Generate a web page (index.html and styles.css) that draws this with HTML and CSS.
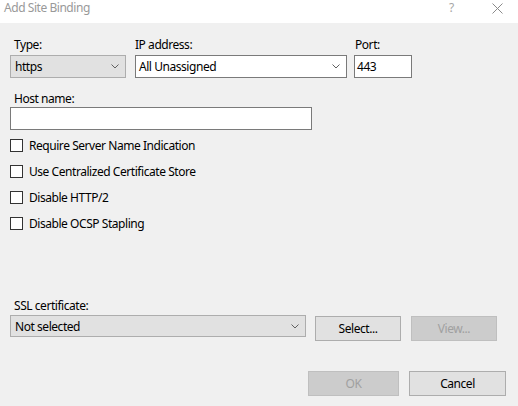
FILE: index.html
```html
<!DOCTYPE html>
<html>
<head>
<meta charset="utf-8">
<link rel="stylesheet" href="styles.css">
</head>
<body>
<div class="dialog">
  <div class="titlebar">
    <span class="title">Add Site Binding</span>
    <span class="help">?</span>
    <span class="close"><svg width="11" height="11" viewBox="0 0 11 11"><path d="M0.5 0.5 L10.5 10.5 M10.5 0.5 L0.5 10.5" stroke="#8a8a8a" stroke-width="1" fill="none"/></svg></span>
  </div>
  <div class="content">
    <div class="row1">
      <div class="field f-type">
        <div class="label">Type:</div>
        <div class="combo gray"><span>https</span><svg class="chev" width="8" height="5" viewBox="0 0 8 5"><path d="M0.5 0.5 L4 4 L7.5 0.5" stroke="#606060" fill="none"/></svg></div>
      </div>
      <div class="field f-ip">
        <div class="label">IP address:</div>
        <div class="combo white"><span>All Unassigned</span><svg class="chev" width="8" height="5" viewBox="0 0 8 5"><path d="M0.5 0.5 L4 4 L7.5 0.5" stroke="#606060" fill="none"/></svg></div>
      </div>
      <div class="field f-port">
        <div class="label">Port:</div>
        <div class="textbox"><span>443</span></div>
      </div>
    </div>
    <div class="host">
      <div class="label">Host name:</div>
      <div class="textbox host-box"></div>
    </div>
    <div class="checks">
      <div class="check"><span class="box"></span><span>Require Server Name Indication</span></div>
      <div class="check"><span class="box"></span><span>Use Centralized Certificate Store</span></div>
      <div class="check"><span class="box"></span><span>Disable HTTP/2</span></div>
      <div class="check"><span class="box"></span><span>Disable OCSP Stapling</span></div>
    </div>
    <div class="ssl">
      <div class="label">SSL certificate:</div>
      <div class="ssl-row">
        <div class="combo gray ssl-combo"><span>Not selected</span><svg class="chev" width="8" height="5" viewBox="0 0 8 5"><path d="M0.5 0.5 L4 4 L7.5 0.5" stroke="#606060" fill="none"/></svg></div>
        <div class="btn btn-select">Select...</div>
        <div class="btn disabled btn-view">View...</div>
      </div>
    </div>
    <div class="footer">
      <div class="btn disabled btn-ok">OK</div>
      <div class="btn btn-cancel">Cancel</div>
    </div>
  </div>
</div>
</body>
</html>
```

FILE: styles.css
```css
* { box-sizing: border-box; }
html, body {
  margin: 0;
  padding: 0;
  background: #f0f0f0;
}
body {
  font-family: "Noto Sans", "Open Sans", sans-serif;
  font-size: 12px;
  letter-spacing: -0.45px;
  color: #000;
  width: 518px;
  height: 406px;
  overflow: hidden;
}
.titlebar {
  height: 23px;
  background: #fff;
  display: flex;
  align-items: flex-start;
  padding-left: 4px;
  line-height: 16px;
}
.title {
  color: #999;
  flex: 1;
}
.help {
  color: #a6a6a6;
  width: 10px;
  margin-right: 33px;
}
.close {
  width: 11px;
  margin-right: 15px;
  padding-top: 3px;
  display: flex;
}
.content {
  padding: 0 12px 0 10px;
}
.label {
  height: 16px;
  line-height: 16px;
  padding-left: 4px;
}
.row1 {
  margin-top: 14px;
  display: grid;
  grid-template-columns: 116px 212px 58px;
  column-gap: 9px;
}
.f-port { margin-left: -2px; width: 58px; }
.f-port .label { padding-left: 1px; }
.f-ip .label { padding-left: 0; }
.field .label { margin-bottom: 2px; }
.combo {
  height: 23px;
  display: flex;
  align-items: center;
  justify-content: space-between;
  padding: 0 6px 0 4px;
  border: 1px solid #adadad;
}
.combo.gray { background: #e1e1e1; }
.combo.white { background: #fff; border-color: #7a7a7a; padding-left: 3px; }
.chev { flex: none; }
.textbox {
  height: 23px;
  background: #fff;
  border: 1px solid #7a7a7a;
  display: flex;
  align-items: center;
  padding-left: 2px;
}
.host { margin-top: 13px; }
.host-box { width: 302px; }
.checks {
  margin-top: 9px;
  display: flex;
  flex-direction: column;
  gap: 13px;
}
.check {
  height: 13px;
  display: flex;
  align-items: center;
  gap: 6px;
}
.box {
  width: 13px;
  height: 13px;
  border: 1px solid #333;
  background: #fff;
  flex: none;
}
.ssl { margin-top: 68px; }
.ssl .label { margin-bottom: 1px; }
.ssl-row {
  display: flex;
  align-items: flex-start;
}
.ssl-combo { width: 296px; height: 22px; }
.btn {
  height: 25px;
  background: #e1e1e1;
  border: 1px solid #adadad;
  display: flex;
  align-items: center;
  justify-content: center;
}
.btn.disabled {
  background: #cccccc;
  border-color: #bfbfbf;
  color: #a0a0a0;
}
.btn-select { width: 86px; margin-left: 9px; margin-top: 1px; }
.btn-view { width: 86px; margin-left: 10px; margin-top: 1px; }
.footer {
  margin-top: 30px;
  display: flex;
  justify-content: flex-end;
  gap: 10px;
}
.btn-ok { width: 91px; }
.btn-cancel { width: 97px; }
```
